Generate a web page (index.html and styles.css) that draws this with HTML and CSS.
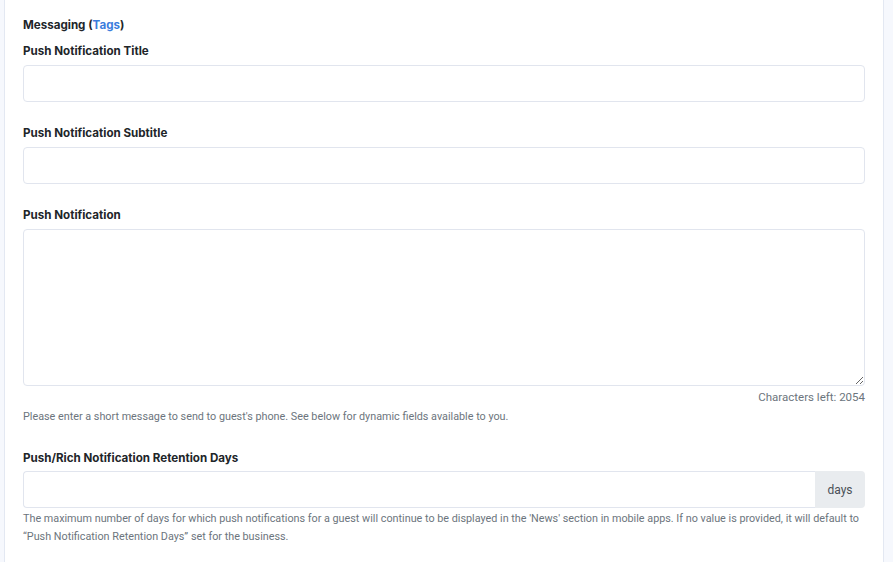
FILE: index.html
```html
<!DOCTYPE html>
<html>
<head>
<meta charset="utf-8">
<link rel="stylesheet" href="styles.css">
</head>
<body>
<div class="panel">
  <div class="section-title">Messaging (<a class="tags" href="#">Tags</a>)</div>
  <div class="field">
    <label class="label">Push Notification Title</label>
    <input class="input" type="text">
  </div>
  <div class="field">
    <label class="label">Push Notification Subtitle</label>
    <input class="input" type="text">
  </div>
  <div class="field">
    <label class="label">Push Notification</label>
    <textarea class="textarea"></textarea>
    <div class="counter">Characters left: 2054</div>
    <div class="help">Please enter a short message to send to guest's phone. See below for dynamic fields available to you.</div>
  </div>
  <div class="field">
    <label class="label low">Push/Rich Notification Retention Days</label>
    <div class="input-group">
      <input class="input grouped" type="text">
      <span class="addon">days</span>
    </div>
    <div class="help tight">The maximum number of days for which push notifications for a guest will continue to be displayed in the 'News' section in mobile apps. If no value is provided, it will default to “Push Notification Retention Days” set for the business.</div>
  </div>
</div>
</body>
</html>
```
FILE: styles.css
```css
html, body {
  margin: 0;
  padding: 0;
  background: #f6f8fd;
  height: 100%;
}
.panel {
  margin-left: 4px;
  width: 842px;
  min-height: 100%;
  box-sizing: content-box;
  background: #fff;
  border-left: 1px solid #e3e8f2;
  border-right: 1px solid #e3e8f2;
  padding: 17px 18px 0 18px;
  font-family: Inter, "Noto Sans", sans-serif;
  color: #212529;
}
.section-title {
  font-size: 11.6px;
  font-weight: 700;
  line-height: 16px;
  margin-bottom: 9px;
}
.tags {
  color: #3b7ddd;
  text-decoration: none;
}
.field {
  display: flex;
  flex-direction: column;
  margin-bottom: 22px;
}
.label {
  font-size: 11.6px;
  font-weight: 700;
  line-height: 16px;
  padding-top: 1px;
  margin-bottom: 6px;
}
.label.low {
  padding-top: 2px;
  margin-bottom: 5px;
}
.input, .textarea {
  box-sizing: border-box;
  border: 1px solid #e1e5ee;
  border-radius: 4px;
  height: 37px;
  background: #fff;
  font-family: Roboto, sans-serif;
  font-size: 12px;
  padding: 6px 10px;
  outline: none;
}
.textarea {
  height: 157px;
  resize: vertical;
}
.counter {
  text-align: right;
  font-family: Roboto, sans-serif;
  font-size: 11.5px;
  color: #6c757d;
  line-height: 13px;
  margin-top: 5px;
}
.help {
  font-family: Roboto, sans-serif;
  font-size: 10.8px;
  color: #6c757d;
  line-height: 18px;
  margin-top: 4px;
}
.help.tight {
  margin-top: 2px;
}
.input-group {
  display: flex;
}
.input.grouped {
  flex: 1;
  border-radius: 4px 0 0 4px;
  border-right: none;
}
.addon {
  display: flex;
  align-items: center;
  justify-content: center;
  width: 50px;
  height: 37px;
  box-sizing: border-box;
  background: #e9ecef;
  border-radius: 0 4px 4px 0;
  font-family: Roboto, sans-serif;
  font-size: 12px;
  color: #495057;
}
```
